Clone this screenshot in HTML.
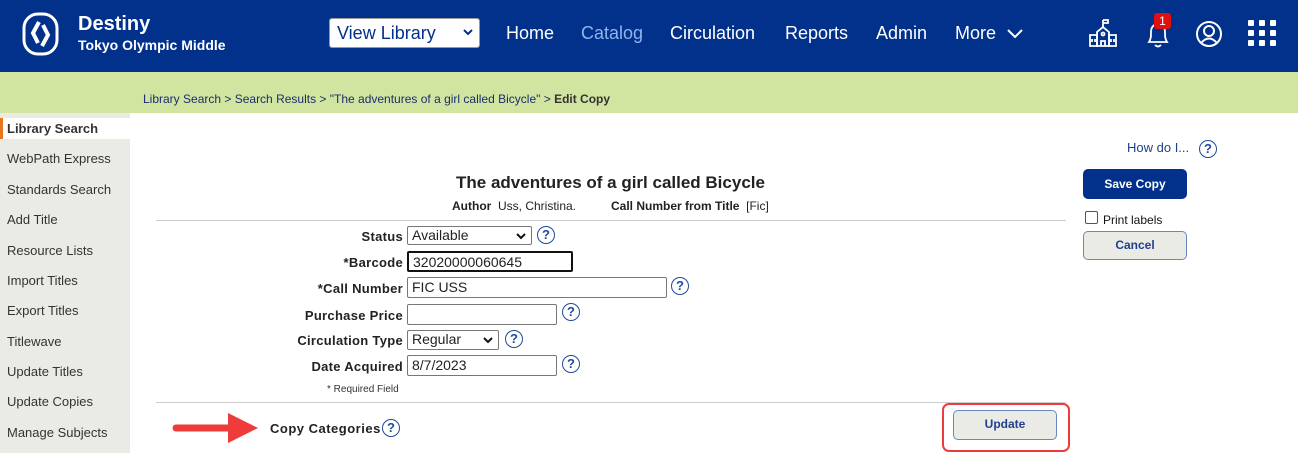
<!DOCTYPE html>
<html><head><meta charset="utf-8"><style>
*{box-sizing:border-box}
body{margin:0;width:1298px;height:453px;overflow:hidden;background:#fff;font-family:"Liberation Sans",Arial,sans-serif;position:relative}
.a{position:absolute;white-space:nowrap}
#hdr{position:absolute;left:0;top:0;width:1298px;height:72px;background:#02318b}
#grn{position:absolute;left:0;top:72px;width:1298px;height:41px;background:#d1e4a0}
#side{position:absolute;left:0;top:113px;width:130px;height:340px;background:#ebebe5}
.nav{color:#fff;font-size:18px;top:23px}
.si{left:7px;font-size:13px;color:#333}
.lbl{font-size:13px;font-weight:bold;color:#222;text-align:right;right:895px;letter-spacing:0.3px}
.inp{border:1px solid #777;height:22px;font-size:14px;padding:1px 4px;color:#222;background:#fff;border-radius:2px}
.q{width:18px;height:18px;border:1.6px solid #1f4a9c;border-radius:50%;color:#1f4a9c;font-size:13px;font-weight:bold;text-align:center;line-height:15px}
.btn{border:1.5px solid #6a86c0;border-radius:5px;background:#ebebe5;color:#1f3f8f;font-size:12px;font-weight:bold;text-align:center}
</style></head><body>
<div id="hdr"></div>
<div id="grn"></div>
<div id="side"></div>
<svg class="a" style="left:22px;top:11px" width="38" height="46" viewBox="0 0 38 46"><rect x="2" y="3" width="33" height="40" rx="14" fill="none" stroke="#fff" stroke-width="3"/><path d="M17 11 L11 22 L16 32" fill="none" stroke="#fff" stroke-width="4"/><path d="M21 14 L26 24 L20 35" fill="none" stroke="#fff" stroke-width="4"/></svg>
<div class="a" style="left:78px;top:13px;color:#fff;font-size:20px;font-weight:bold">Destiny</div>
<div class="a" style="left:78px;top:37px;color:#fff;font-size:14px;font-weight:bold">Tokyo Olympic Middle</div>
<div class="a" style="left:329px;top:18px;width:151px;height:30px;background:#fff;border-radius:3px;border:1px solid #999"></div>
<div class="a" style="left:337px;top:23px;font-size:18px;color:#02318b">View Library</div>
<svg class="a" style="left:462px;top:28px" width="12" height="10"><path d="M2 2 L6 6 L10 2" fill="none" stroke="#02318b" stroke-width="2"/></svg>
<div class="a nav" style="left:506px">Home</div>
<div class="a nav" style="left:581px;color:#8fb4ef">Catalog</div>
<div class="a nav" style="left:670px">Circulation</div>
<div class="a nav" style="left:785px">Reports</div>
<div class="a nav" style="left:876px">Admin</div>
<div class="a nav" style="left:955px">More</div>
<svg class="a" style="left:1006px;top:28px" width="18" height="12"><path d="M2 2 L9 9 L16 2" fill="none" stroke="#fff" stroke-width="2"/></svg>
<svg class="a" style="left:1088px;top:18px" width="32" height="30" viewBox="0 0 32 30" fill="none" stroke="#fff" stroke-width="1.8"><path d="M15 2v7M15 2h5v3h-5"/><path d="M9 14 L15 9 L21 14 V28 H9Z"/><path d="M2 17h7v11H2zM21 17h7v11h-7z"/><circle cx="15" cy="16" r="1.5"/><path d="M13 28v-5h4v5M4 21v3M7 21v3M23 21v3M26 21v3"/></svg>
<svg class="a" style="left:1145px;top:20px" width="26" height="30" viewBox="0 0 26 30" fill="none" stroke="#fff" stroke-width="1.8"><path d="M4 22 C6 19 6 16 6 12 C6 7 9 4 13 4 C17 4 20 7 20 12 C20 16 20 19 22 22 Z"/><path d="M10 25 Q13 28 16 25"/></svg>
<div class="a" style="left:1154px;top:13px;width:17px;height:16px;background:#e01010;border-radius:3px;color:#fff;font-size:12px;text-align:center;line-height:16px">1</div>
<svg class="a" style="left:1195px;top:20px" width="28" height="28" viewBox="0 0 28 28" fill="none" stroke="#fff" stroke-width="2"><circle cx="14" cy="14" r="12"/><circle cx="14" cy="11" r="5"/><path d="M6 23 Q14 14 22 23"/></svg>
<svg class="a" style="left:1248px;top:20px" width="28" height="27" fill="#fff"><rect x="0" y="0" width="6" height="6" rx="1"/><rect x="11" y="0" width="6" height="6" rx="1"/><rect x="22" y="0" width="6" height="6" rx="1"/><rect x="0" y="10" width="6" height="6" rx="1"/><rect x="11" y="10" width="6" height="6" rx="1"/><rect x="22" y="10" width="6" height="6" rx="1"/><rect x="0" y="20" width="6" height="6" rx="1"/><rect x="11" y="20" width="6" height="6" rx="1"/><rect x="22" y="20" width="6" height="6" rx="1"/></svg>
<div class="a" style="left:143px;top:92px;font-size:12px;color:#1a2e6e">Library Search &gt; Search Results &gt; "The adventures of a girl called Bicycle" &gt; <b style="color:#333">Edit Copy</b></div>
<div class="a" style="left:0;top:118px;width:130px;height:21px;background:#fff;border-left:3px solid #e8761c"></div>
<div class="a si" style="top:121px;font-weight:bold">Library Search</div>
<div class="a si" style="top:151px">WebPath Express</div>
<div class="a si" style="top:182px">Standards Search</div>
<div class="a si" style="top:212px">Add Title</div>
<div class="a si" style="top:243px">Resource Lists</div>
<div class="a si" style="top:273px">Import Titles</div>
<div class="a si" style="top:303px">Export Titles</div>
<div class="a si" style="top:334px">Titlewave</div>
<div class="a si" style="top:364px">Update Titles</div>
<div class="a si" style="top:394px">Update Copies</div>
<div class="a si" style="top:425px">Manage Subjects</div>
<div class="a" style="left:1127px;top:140px;font-size:13px;color:#1f3f8f">How do I...</div>
<div class="a q" style="left:1199px;top:140px">?</div>
<div class="a" style="left:1083px;top:169px;width:104px;height:30px;background:#02318b;border-radius:5px;color:#fff;font-size:12px;font-weight:bold;text-align:center;line-height:30px">Save Copy</div>
<div class="a" style="left:1085px;top:211px;width:13px;height:13px;border:1px solid #555;border-radius:2px;background:#fff"></div>
<div class="a" style="left:1103px;top:213px;font-size:12px;color:#111">Print labels</div>
<div class="a btn" style="left:1083px;top:231px;width:104px;height:29px;line-height:26px">Cancel</div>
<div class="a" style="left:456px;top:173px;font-size:17px;font-weight:bold;color:#222">The adventures of a girl called Bicycle</div>
<div class="a" style="left:452px;top:199px;font-size:12px;color:#222"><b>Author</b>&nbsp; Uss, Christina.</div>
<div class="a" style="left:611px;top:199px;font-size:12px;color:#222"><b>Call Number from Title</b>&nbsp; [Fic]</div>
<div class="a" style="left:156px;top:220px;width:910px;height:1px;background:#ccc"></div>
<div class="a lbl" style="top:229px">Status</div>
<div class="a inp" style="left:407px;top:226px;width:125px;height:19px;font-size:14px;padding:0 4px">Available</div>
<svg class="a" style="left:516px;top:233px" width="10" height="7"><path d="M1 1 L5 5 L9 1" fill="none" stroke="#111" stroke-width="2"/></svg>
<div class="a q" style="left:537px;top:226px">?</div>
<div class="a lbl" style="top:255px">*Barcode</div>
<div class="a inp" style="left:407px;top:251px;width:166px;height:21px;border:2px solid #111">32020000060645</div>
<div class="a lbl" style="top:281px">*Call Number</div>
<div class="a inp" style="left:407px;top:277px;width:260px;height:21px">FIC USS</div>
<div class="a q" style="left:671px;top:277px">?</div>
<div class="a lbl" style="top:308px">Purchase Price</div>
<div class="a inp" style="left:407px;top:304px;width:150px;height:21px"></div>
<div class="a q" style="left:562px;top:303px">?</div>
<div class="a lbl" style="top:333px">Circulation Type</div>
<div class="a inp" style="left:407px;top:330px;width:92px;height:20px;padding:0 4px">Regular</div>
<svg class="a" style="left:483px;top:337px" width="10" height="7"><path d="M1 1 L5 5 L9 1" fill="none" stroke="#111" stroke-width="2"/></svg>
<div class="a q" style="left:505px;top:330px">?</div>
<div class="a lbl" style="top:359px">Date Acquired</div>
<div class="a inp" style="left:407px;top:355px;width:150px;height:21px">8/7/2023</div>
<div class="a q" style="left:562px;top:355px">?</div>
<div class="a" style="left:327px;top:384px;font-size:10px;color:#333">* Required Field</div>
<div class="a" style="left:156px;top:402px;width:910px;height:1px;background:#ccc"></div>
<svg class="a" style="left:170px;top:410px" width="92" height="35"><path d="M6 18 H60" stroke="#ee3b3b" stroke-width="7" stroke-linecap="round"/><path d="M58 3 L88 18 L58 33 Z" fill="#ee3b3b"/></svg>
<div class="a" style="left:270px;top:421px;font-size:13px;font-weight:bold;color:#222;letter-spacing:0.5px">Copy Categories</div>
<div class="a q" style="left:382px;top:419px">?</div>
<div class="a" style="left:942px;top:403px;width:128px;height:49px;border:2.5px solid #ee3b3b;border-radius:7px"></div>
<div class="a btn" style="left:953px;top:410px;width:104px;height:30px;line-height:27px">Update</div>
</body></html>
